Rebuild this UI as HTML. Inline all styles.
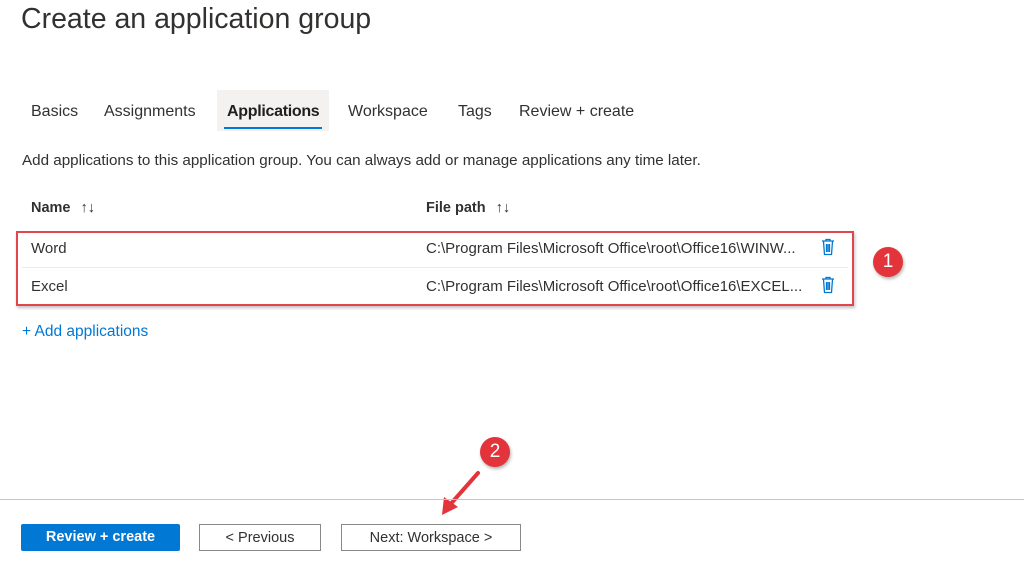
<!DOCTYPE html>
<html><head><style>
body{margin:0;width:1024px;height:571px;background:#fff;font-family:"Liberation Sans",sans-serif;color:#323130;position:relative;overflow:hidden}
.a{position:absolute;white-space:nowrap}
.t{font-size:16px;top:103px}
.btn{position:absolute;top:524px;height:27px;box-sizing:border-box;font-size:14.5px;text-align:center;line-height:27px}
.badge{position:absolute;width:30px;height:30px;border-radius:50%;background:#e3343b;color:#fff;font-size:19px;text-align:center;line-height:30px;box-shadow:1px 2px 3px rgba(0,0,0,.3)}
</style></head><body>
<div class="a" style="left:21px;top:3px;font-size:28.5px;color:#323130">Create an application group</div>
<div class="a" style="left:217px;top:90px;width:112px;height:41px;background:#f3f2f1"></div>
<div class="a" style="left:224px;top:127px;width:98px;height:2px;background:#0078d4"></div>
<div class="a t" style="left:31px">Basics</div>
<div class="a t" style="left:104px">Assignments</div>
<div class="a t" style="left:227px;font-weight:bold;color:#201f1e;letter-spacing:-0.3px">Applications</div>
<div class="a t" style="left:348px">Workspace</div>
<div class="a t" style="left:458px">Tags</div>
<div class="a t" style="left:519px">Review + create</div>
<div class="a" style="left:22px;top:152px;font-size:15.2px">Add applications to this application group. You can always add or manage applications any time later.</div>
<div class="a" style="left:31px;top:200px;font-size:14.5px;font-weight:bold">Name <span style="font-weight:normal;margin-left:6px">↑↓</span></div>
<div class="a" style="left:426px;top:200px;font-size:14.5px;font-weight:bold">File path <span style="font-weight:normal;margin-left:6px">↑↓</span></div>
<div class="a" style="left:16px;top:231px;width:834px;height:71px;border:2px solid #e0474c;box-shadow:1px 2px 3px rgba(0,0,0,.25)"></div>
<div class="a" style="left:22px;top:267px;width:826px;height:1px;background:#edebe9"></div>
<div class="a" style="left:31px;top:240px;font-size:15px">Word</div>
<div class="a" style="left:31px;top:278px;font-size:15px">Excel</div>
<div class="a" style="left:426px;top:240px;font-size:15px">C:\Program Files\Microsoft Office\root\Office16\WINW...</div>
<div class="a" style="left:426px;top:278px;font-size:15px">C:\Program Files\Microsoft Office\root\Office16\EXCEL...</div>
<svg class="a" style="left:820px;top:238px" width="16" height="18" viewBox="0 0 16 18" fill="none" stroke="#0078d4" stroke-width="1.3"><path d="M2 3h12M6 3V1.5h4V3M3.5 3.5l1 13h7l1-13M6.5 6v8M8 6v8M9.5 6v8"/></svg>
<svg class="a" style="left:820px;top:276px" width="16" height="18" viewBox="0 0 16 18" fill="none" stroke="#0078d4" stroke-width="1.3"><path d="M2 3h12M6 3V1.5h4V3M3.5 3.5l1 13h7l1-13M6.5 6v8M8 6v8M9.5 6v8"/></svg>
<div class="badge" style="left:873px;top:247px">1</div>
<div class="a" style="left:22px;top:323px;font-size:15.5px;color:#0078d4">+ Add applications</div>
<div class="badge" style="left:480px;top:437px">2</div>
<svg class="a" style="left:430px;top:465px" width="60" height="60"><line x1="48" y1="8" x2="18" y2="42" stroke="#e3343b" stroke-width="4" stroke-linecap="round"/><polygon points="12,50 14,32 28,42" fill="#e3343b"/></svg>
<div class="a" style="left:0;top:499px;width:1024px;height:1px;background:#c8c6c4"></div>
<div class="btn" style="left:21px;width:159px;background:#0078d4;color:#fff;font-weight:bold;border-radius:2px">Review + create</div>
<div class="btn" style="left:199px;width:122px;border:1px solid #8a8886">&lt; Previous</div>
<div class="btn" style="left:341px;width:180px;border:1px solid #8a8886">Next: Workspace &gt;</div>
</body></html>
